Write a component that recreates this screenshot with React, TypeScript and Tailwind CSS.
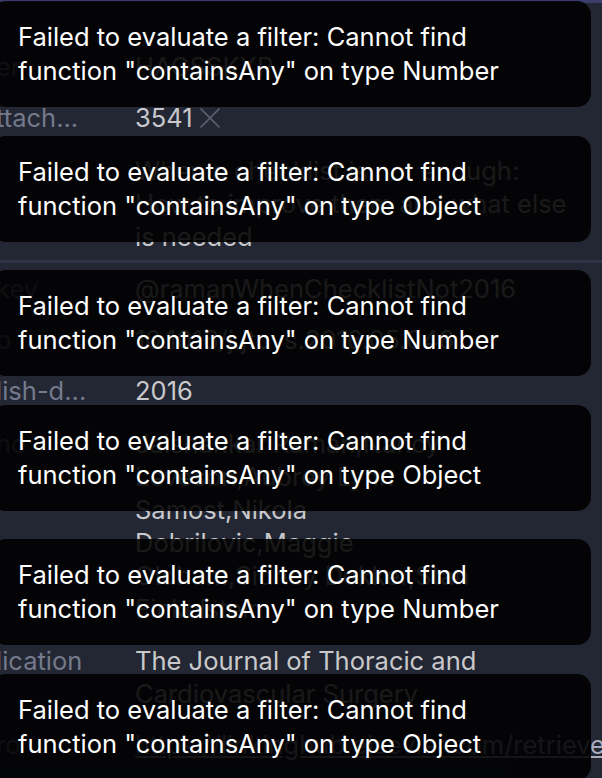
import { X } from "lucide-react";

const toasts = ["Number", "Object", "Number", "Object", "Number", "Object"];

const Row = ({
  label,
  children,
  close,
  className = "",
}: {
  label: string;
  children: React.ReactNode;
  close?: boolean;
  className?: string;
}) => (
  <div className={`flex items-start py-[9px] ${className}`}>
    <div className="w-[139px] shrink-0 -ml-[4px] overflow-hidden whitespace-nowrap text-[#747a8b]">
      {label}
    </div>
    <div className="min-w-0 flex-1 text-[#c9c9cc]">{children}</div>
    {close && (
      <X size={36} strokeWidth={1.15} className="mr-[54px] self-center text-[#5d6273]" />
    )}
  </div>
);

const App = () => {
  return (
    <div className="relative h-[778px] w-[602px] overflow-hidden bg-[#232633] font-['Inter','Liberation_Sans',sans-serif] text-[25.5px] leading-[33px]">
      {/* Top strip */}
      <div className="h-[3px] bg-[#3c3d6c]" />

      <div className="flex">
        {/* Properties */}
        <div className="flex-1 pt-[38px]">
          <Row label="er">HAGSSKXP</Row>
          <Row label="ttach...">
            <span className="flex h-[33px] items-center">
              3541
              <X size={36} strokeWidth={1.15} className="-ml-[1px] -my-[2px] text-[#5d6273]" />
            </span>
          </Row>
          <Row label="" className="pt-[11px] pb-[7px]">
            <div className="flex flex-col">
              <span>When a checklist is not enough:</span>
              <span>How to improve them and what else</span>
              <span>is needed</span>
            </div>
          </Row>
          <div className="mr-[8px] h-[3px] bg-[#2f3446]" />
          <Row label="key">@ramanWhenChecklistNot2016</Row>
          <Row label="o">10.1016/j.jtcvs.2016.05.046</Row>
          <Row label="lish-d...">2016</Row>
          <Row label="ho" close className="pt-[11px] pb-[10px]">
            <div className="flex flex-col">
              <span>Jaishankar Raman,Nancy</span>
              <span>Leveson,Aubrey Lynn</span>
              <span>Samost,Nikola</span>
              <span>Dobrilovic,Maggie</span>
              <span>Oldham,Sidney Dekker,Stan</span>
              <span>Finkelstein</span>
            </div>
          </Row>
          <Row label="lication">
            <div className="flex flex-col">
              <span>The Journal of Thoracic and</span>
              <span>Cardiovascular Surgery</span>
            </div>
          </Row>
          <Row label="ro">
            <div className="overflow-hidden whitespace-nowrap text-[#a9abbd] underline">
              https://linkinghub.elsevier.com/retrieve/pii/S0022522316305128
            </div>
          </Row>
        </div>
        {/* Scrollbar */}
        <div className="w-[10px] bg-[#292c3b]" />
      </div>

      {/* Notices */}
      <div className="absolute inset-0 -ml-[8px] flex flex-col gap-[28.6px] pt-[1px] pr-[11px]">
        {toasts.map((type, i) => (
          <div
            key={i}
            className="h-[106px] shrink-0 rounded-[14px] bg-black/[0.88] pl-[26px] pt-[19px] text-white leading-[34px]"
          >
            Failed to evaluate a filter: Cannot find
            <br />
            function "containsAny" on type {type}
          </div>
        ))}
      </div>
    </div>
  );
};

export default App;
